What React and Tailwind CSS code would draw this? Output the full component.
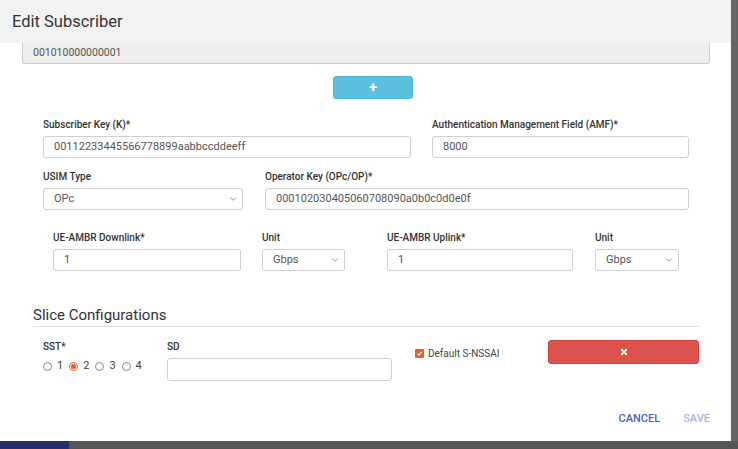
import { ChevronDown } from 'lucide-react'

function Label({ children, className = '' }) {
  return <div className={`h-[14px] text-[10px] leading-[14px] font-medium text-[#333] ${className}`}>{children}</div>
}

function TextInput({ value, className = '' }) {
  return (
    <div className={`h-[22px] border border-[#cfcfcf] rounded-[3px] bg-white flex items-center px-[10px] text-[11px] text-[#555] ${className}`}>
      {value}
    </div>
  )
}

function Select({ value, className = '' }) {
  return (
    <div className={`h-[22px] border border-[#cfcfcf] rounded-[3px] bg-white flex items-center justify-between pl-[10px] pr-[4px] text-[11px] text-[#555] ${className}`}>
      <span>{value}</span>
      <ChevronDown size={10} strokeWidth={1.5} className="text-[#555]" />
    </div>
  )
}

function Radio({ checked, label }) {
  return (
    <div className="flex items-center gap-[5px]">
      {checked ? (
        <span className="w-[9px] h-[9px] rounded-full border border-[#e8562a] flex items-center justify-center">
          <span className="w-[5px] h-[5px] rounded-full bg-[#e8562a]" />
        </span>
      ) : (
        <span className="w-[9px] h-[9px] rounded-full border border-[#8a8a8a]" />
      )}
      <span className="text-[11px] text-[#444]">{label}</span>
    </div>
  )
}

export default function App() {
  return (
    <div className="w-[738px] h-[449px] bg-[#636363] flex flex-col overflow-hidden" style={{ fontFamily: 'Roboto, "Liberation Sans", sans-serif' }}>
      <div className="flex h-[441px]">
        <div className="w-[731px] h-full bg-white flex flex-col">
          {/* Header */}
          <div className="h-[43px] bg-[#f1f2f4] flex items-center pt-[1px] px-[12px] text-[16.5px] text-[#333]">Edit Subscriber</div>

          {/* IMSI */}
          <div className="ml-[22px] w-[688px] h-[21px] bg-[#eeeeee] border border-t-0 border-[#cccccc] rounded-b-[3px] flex items-center px-[10px] text-[10.5px] text-[#555]">
            001010000000001
          </div>

          <button className="ml-[333px] mt-[12px] w-[80px] h-[23px] bg-[#5bc0de] border border-[#46b8da] rounded-[3px] text-white text-[15px] leading-none font-bold flex items-center justify-center">
            +
          </button>

          {/* Row 1 */}
          <div className="flex mt-[19px]">
            <div className="ml-[43px] w-[368px]">
              <Label>Subscriber Key (K)*</Label>
              <TextInput value="00112233445566778899aabbccddeeff" className="mt-[4px]" />
            </div>
            <div className="ml-[21px] w-[257px]">
              <Label>Authentication Management Field (AMF)*</Label>
              <TextInput value="8000" className="mt-[4px]" />
            </div>
          </div>

          {/* Row 2 */}
          <div className="flex mt-[12px]">
            <div className="ml-[43px] w-[200px]">
              <Label>USIM Type</Label>
              <Select value="OPc" className="mt-[4px]" />
            </div>
            <div className="ml-[22px] w-[424px]">
              <Label>Operator Key (OPc/OP)*</Label>
              <TextInput value="000102030405060708090a0b0c0d0e0f" className="mt-[4px]" />
            </div>
          </div>

          {/* Row 3 */}
          <div className="flex mt-[21px]">
            <div className="ml-[53px] w-[188px]">
              <Label>UE-AMBR Downlink*</Label>
              <TextInput value="1" className="mt-[4px]" />
            </div>
            <div className="ml-[21px] w-[83px]">
              <Label>Unit</Label>
              <Select value="Gbps" className="mt-[4px]" />
            </div>
            <div className="ml-[42px] w-[186px]">
              <Label>UE-AMBR Uplink*</Label>
              <TextInput value="1" className="mt-[4px]" />
            </div>
            <div className="ml-[22px] w-[84px]">
              <Label>Unit</Label>
              <Select value="Gbps" className="mt-[4px]" />
            </div>
          </div>

          {/* Slice configurations */}
          <div className="ml-[33px] w-[666px] mt-[34px] border-b border-[#e0e0e0] pb-[1px]">
            <div className="text-[15px] leading-[20px] text-[#333]">Slice Configurations</div>
          </div>

          <div className="flex mt-[13px]">
            <div className="ml-[43px] w-[124px]">
              <Label>SST*</Label>
              <div className="flex gap-[6px] mt-[4px]">
                <Radio label="1" />
                <Radio checked label="2" />
                <Radio label="3" />
                <Radio label="4" />
              </div>
            </div>
            <div className="w-[225px]">
              <Label>SD</Label>
              <div className="mt-[4px] h-[23px] border border-[#cfcfcf] rounded-[3px]" />
            </div>
            <div className="ml-[23px] w-[133px] pt-[7px] flex items-start gap-[4px]">
              <span className="w-[9px] h-[9px] mt-[2px] rounded-[1px] bg-[#e8622c] flex items-center justify-center">
                <svg width="7" height="7" viewBox="0 0 10 10">
                  <path d="M2 5.2 L4.2 7.4 L8.2 2.8" fill="none" stroke="white" strokeWidth="1.8" />
                </svg>
              </span>
              <span className="text-[10px] leading-[13px] text-[#444]">Default S-NSSAI</span>
            </div>
            <button className="w-[151px] h-[24px] bg-[#dc534f] border border-[#d43f3a] rounded-[3px] flex items-center justify-center">
              <svg width="8" height="8" viewBox="0 0 10 10">
                <path d="M1.5 1.5 L8.5 8.5 M8.5 1.5 L1.5 8.5" stroke="white" strokeWidth="2.4" />
              </svg>
            </button>
          </div>

          <div className="flex justify-end items-center mt-[30px] pr-[21px] gap-[23px] text-[11px] font-medium">
            <span className="text-[#4f5fc4]">CANCEL</span>
            <span className="text-[#aab4ee]">SAVE</span>
          </div>
        </div>
        <div className="flex-1 bg-[#666666]" />
      </div>
      <div className="flex h-[8px]">
        <div className="w-[69px] bg-[#27306a]" />
        <div className="flex-1 bg-[#565656]" />
      </div>
    </div>
  )
}
